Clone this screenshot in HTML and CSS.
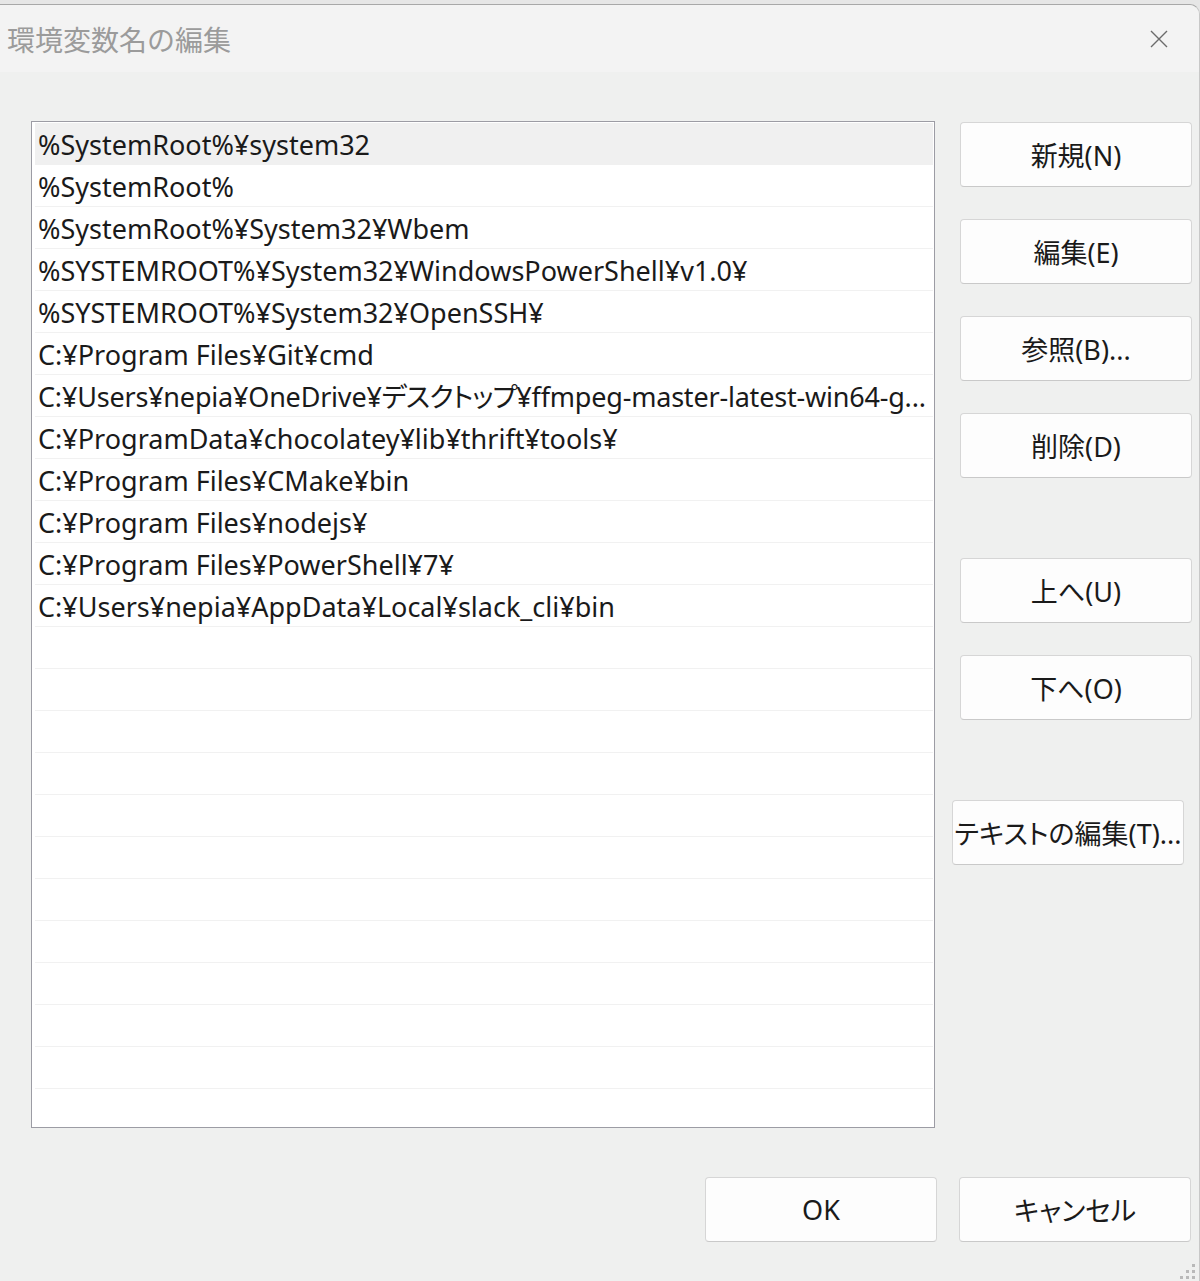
FILE: index.html
```html
<!DOCTYPE html>
<html lang="ja">
<head>
  <meta charset="UTF-8" />
  <title>環境変数名の編集</title>
  <link rel="stylesheet" href="styles.css">
</head>
<body>
  <div class="window">
    <div class="titlebar">
      <span class="title">環境変数名の編集</span>
      <svg class="close" width="18" height="18" viewBox="0 0 18 18">
        <path d="M1 1 L17 17 M17 1 L1 17" stroke="#6b6b6b" stroke-width="1.4" fill="none"/>
      </svg>
    </div>

    <div class="content">
      <div class="list">
        <div class="row selected">%SystemRoot%¥system32</div>
        <div class="row">%SystemRoot%</div>
        <div class="row">%SystemRoot%¥System32¥Wbem</div>
        <div class="row">%SYSTEMROOT%¥System32¥WindowsPowerShell¥v1.0¥</div>
        <div class="row">%SYSTEMROOT%¥System32¥OpenSSH¥</div>
        <div class="row">C:¥Program Files¥Git¥cmd</div>
        <div class="row narrow">C:¥Users¥nepia¥OneDrive¥<span class="kana">デスクトップ</span>¥ffmpeg-master-latest-win64-g...</div>
        <div class="row">C:¥ProgramData¥chocolatey¥lib¥thrift¥tools¥</div>
        <div class="row">C:¥Program Files¥CMake¥bin</div>
        <div class="row">C:¥Program Files¥nodejs¥</div>
        <div class="row">C:¥Program Files¥PowerShell¥7¥</div>
        <div class="row">C:¥Users¥nepia¥AppData¥Local¥slack_cli¥bin</div>
        <div class="row"></div>
        <div class="row"></div>
        <div class="row"></div>
        <div class="row"></div>
        <div class="row"></div>
        <div class="row"></div>
        <div class="row"></div>
        <div class="row"></div>
        <div class="row"></div>
        <div class="row"></div>
        <div class="row"></div>
        <div class="row last"></div>
      </div>

      <div class="side">
        <button class="btn">新規(N)</button>
        <button class="btn">編集(E)</button>
        <button class="btn">参照(B)...</button>
        <button class="btn">削除(D)</button>
        <button class="btn group">上へ(U)</button>
        <button class="btn">下へ(O)</button>
        <button class="btn group shifted">テキストの編集(T)...</button>
      </div>
    </div>

    <div class="footer">
      <button class="btn">OK</button>
      <button class="btn">キャンセル</button>
    </div>

    <svg class="grip" width="20" height="20" viewBox="0 0 20 20">
      <rect x="15" y="3" width="3" height="3" fill="#b9b9b9"/>
      <rect x="9" y="9" width="3" height="3" fill="#b9b9b9"/>
      <rect x="15" y="9" width="3" height="3" fill="#b9b9b9"/>
      <rect x="3" y="15" width="3" height="3" fill="#b9b9b9"/>
      <rect x="9" y="15" width="3" height="3" fill="#b9b9b9"/>
      <rect x="15" y="15" width="3" height="3" fill="#b9b9b9"/>
    </svg>
  </div>
</body>
</html>
```

FILE: styles.css
```css
:root {
  --bg: #eff0ef;
  --title-bg: #f3f3f3;
  --text: #1a1a1a;
  --btn-bg: #fdfdfd;
  --btn-border: #d6d6d6;
}

* {
  margin: 0;
  padding: 0;
  box-sizing: border-box;
}

body {
  font-family: "Noto Sans", "Noto Sans CJK JP", sans-serif;
  font-feature-settings: "palt";
  background: #e6e6e6;
  color: var(--text);
  width: 1200px;
  height: 1281px;
  overflow: hidden;
}

.window {
  position: relative;
  margin-top: 4px;
  height: 1277px;
  background: var(--bg);
  border-top: 1px solid #a8a8a8;
  border-right: 1px solid #c8c8c8;
  border-top-right-radius: 10px;
  display: flex;
  flex-direction: column;
}

.titlebar {
  height: 67px;
  background: var(--title-bg);
  border-top-right-radius: 10px;
  display: flex;
  align-items: center;
  justify-content: space-between;
  padding: 0 31px 0 7px;
}

.title {
  font-size: 28px;
  color: #9b9b9b;
  font-family: "Noto Sans CJK JP", sans-serif;
  font-feature-settings: normal;
}

.content {
  display: flex;
  padding: 49px 0 0 31px;
}

.list {
  width: 904px;
  height: 1007px;
  background: #fff;
  border: 1px solid #9c9ca4;
  padding: 1px 1px 0 3px;
}

.row {
  height: 42px;
  line-height: 38px;
  padding-top: 3px;
  font-size: 27px;
  padding-left: 3px;
  border-bottom: 1px solid #f1f1f1;
  white-space: nowrap;
  overflow: hidden;
}

.row.narrow {
  letter-spacing: -0.2px;
}

.row .kana {
  letter-spacing: -1px;
}

.row.selected {
  background: #f0f0f0;
  border-bottom-color: #f0f0f0;
}

.row.last {
  border-bottom: none;
}

.side {
  display: flex;
  flex-direction: column;
  gap: 32px;
  margin-left: 25px;
  padding-top: 1px;
}

.btn {
  width: 232px;
  height: 65px;
  padding: 0;
  white-space: nowrap;
  background: var(--btn-bg);
  border: 1px solid var(--btn-border);
  border-bottom-color: #c9c9c9;
  border-radius: 4px;
  font-family: "Noto Sans", "Noto Sans CJK JP", sans-serif;
  font-feature-settings: "palt";
  font-size: 27px;
  color: var(--text);
}

.btn.group {
  margin-top: 48px;
}

.btn.shifted {
  margin-left: -8px;
}

.footer {
  display: flex;
  justify-content: flex-end;
  gap: 22px;
  padding: 49px 8px 0 0;
}

.grip {
  position: absolute;
  right: 2px;
  bottom: 0;
}
```
